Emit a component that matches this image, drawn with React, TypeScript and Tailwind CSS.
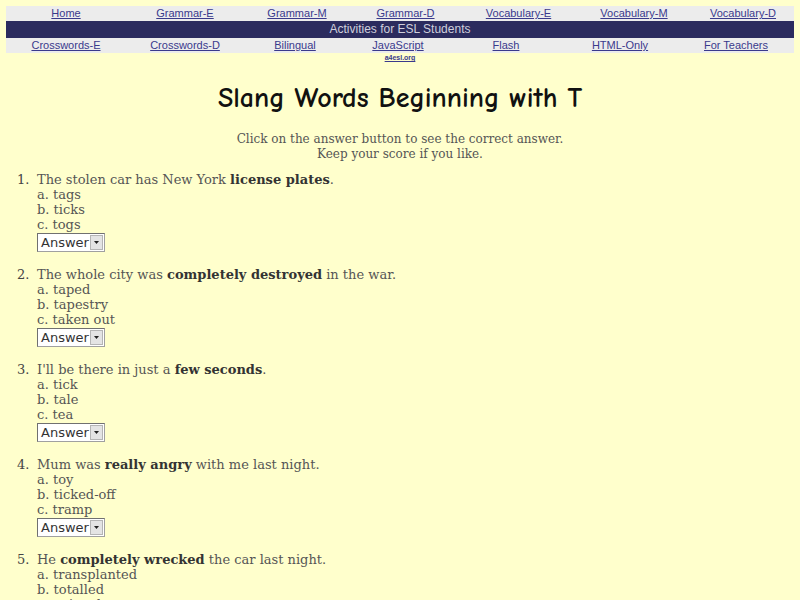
import React from "react";

const row1 = ["Home", "Grammar-E", "Grammar-M", "Grammar-D", "Vocabulary-E", "Vocabulary-M", "Vocabulary-D"];
const row3 = ["Crosswords-E", "Crosswords-D", "Bilingual", "JavaScript", "Flash", "HTML-Only", "For Teachers"];

type Q = { pre: string; bold: string; post: string; opts: string[] };
const qs: Q[] = [
  { pre: "The stolen car has New York ", bold: "license plates", post: ".", opts: ["tags", "ticks", "togs"] },
  { pre: "The whole city was ", bold: "completely destroyed", post: " in the war.", opts: ["taped", "tapestry", "taken out"] },
  { pre: "I'll be there in just a ", bold: "few seconds", post: ".", opts: ["tick", "tale", "tea"] },
  { pre: "Mum was ", bold: "really angry", post: " with me last night.", opts: ["toy", "ticked-off", "tramp"] },
  { pre: "He ", bold: "completely wrecked", post: " the car last night.", opts: ["transplanted", "totalled", "twisted"] },
];

function AnswerBox() {
  return (
    <div className="flex items-stretch h-[19px] w-[68px] bg-white border border-[#a0a0a0] border-t-[#707070] border-l-[#707070] mt-[1px]">
      <span className="flex-1 pl-[3px] text-[13px] leading-[17px] text-[#333]" style={{ fontFamily: '"DejaVu Sans", sans-serif' }}>Answer</span>
      <span className="w-[13px] my-[1px] mr-[1px] bg-[#e4e4e4] border border-[#b5b5b5] flex items-center justify-center">
        <svg width="5" height="3" viewBox="0 0 5 3"><path d="M0 0h5L2.5 3z" fill="#222" /></svg>
      </span>
    </div>
  );
}

export default function App() {
  return (
    <div className="h-[600px] overflow-hidden bg-[#ffffcc] pt-[6px] px-[6px]" style={{ fontFamily: '"DejaVu Serif", serif' }}>
      <div style={{ fontFamily: '"Liberation Sans", Arial, sans-serif' }}>
        <div className="grid grid-cols-[120px_118px_106px_111px_115px_116px_1fr] bg-[#ececec] h-[15px] items-center">
          {row1.map((t) => (
            <a key={t} className="text-center text-[11px] leading-[15px] text-[#3a3a8c] underline">{t}</a>
          ))}
        </div>
        <div className="bg-[#2b2b5e] h-[17px] text-center text-[12px] leading-[17px] text-[#cfcfdc]">Activities for ESL Students</div>
        <div className="grid grid-cols-[120px_118px_102px_104px_112px_116px_1fr] bg-[#ececec] h-[15px] items-center">
          {row3.map((t) => (
            <a key={t} className="text-center text-[11px] leading-[15px] text-[#3a3a8c] underline">{t}</a>
          ))}
        </div>
        <div className="text-center text-[7px] leading-[10px] font-bold text-[#3a3a8c] underline">a4esl.org</div>
      </div>

      <h1 className="text-center text-[28px] leading-[30px] font-bold text-[#111] mt-[20px]" style={{ fontFamily: '"Comic Sans MS", "Comic Neue", "Open Sans", sans-serif' }}>
        Slang Words Beginning with T
      </h1>

      <div className="text-center text-[12px] leading-[15px] text-[#555] mt-[19px]">
        <div>Click on the answer button to see the correct answer.</div>
        <div>Keep your score if you like.</div>
      </div>

      <ol className="mt-[10px] text-[13px] leading-[15px]">
        {qs.map((q, i) => (
          <li key={i} className="flex mb-[15px]">
            <span className="w-[31px] pl-[11px] text-[#444]">{i + 1}.</span>
            <div>
              <div className="text-[#555]">
                {q.pre}
                <b className="text-[#333]">{q.bold}</b>
                {q.post}
              </div>
              <div className="text-[#555]">a. {q.opts[0]}</div>
              <div className="text-[#555]">b. {q.opts[1]}</div>
              <div className="text-[#555]">c. {q.opts[2]}</div>
              <AnswerBox />
            </div>
          </li>
        ))}
      </ol>
    </div>
  );
}
